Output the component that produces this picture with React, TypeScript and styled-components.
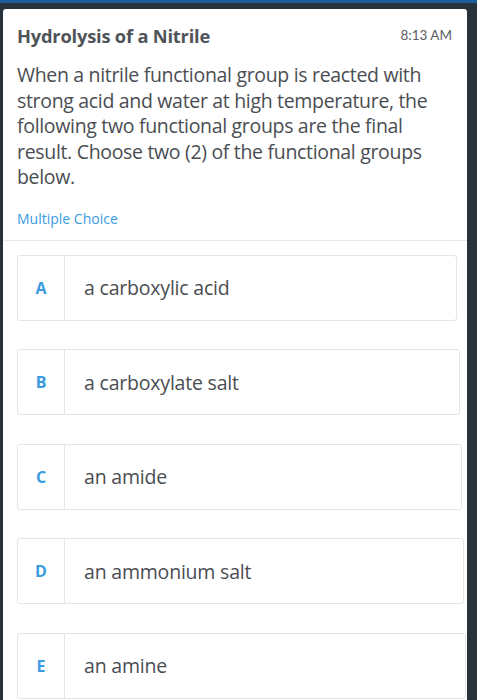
import React, { FC } from 'react';
import styled, { createGlobalStyle } from 'styled-components';

const GlobalStyle = createGlobalStyle`
  html, body {
    margin: 0;
    padding: 0;
    background: #26333d;
  }
  body {
    font-family: "Open Sans", Lato, sans-serif;
  }
`;

const Screen = styled.div`
  width: 477px;
  height: 700px;
  overflow: hidden;
  background: #26333d;
  border-top: 3px solid #1c5b9c;
  box-sizing: border-box;
  padding: 6px 10px 0 3px;
`;

const Card = styled.div`
  background: #ffffff;
  border-radius: 3px 3px 0 0;
  min-height: 720px;
`;

const Header = styled.div`
  display: flex;
  align-items: center;
  justify-content: space-between;
  padding: 14px 15px 0 14px;
  height: 24px;
`;

const Title = styled.div`
  font-size: 18.3px;
  font-weight: 700;
  color: #505459;
  letter-spacing: -0.2px;
`;

const Time = styled.div`
  font-family: Lato, sans-serif;
  font-size: 13.5px;
  color: #5a5e63;
`;

const Question = styled.p`
  margin: 15px 0 0;
  padding: 0 12px 0 14px;
  font-size: 19.5px;
  line-height: 25.5px;
  color: #4a4d52;
  letter-spacing: -0.32px;
`;

const TypeLabel = styled.div`
  padding: 20px 14px 12px;
  font-size: 14px;
  line-height: 18px;
  color: #3a9be0;
  border-bottom: 1px solid #e6e8ea;
`;

const Options = styled.div`
  display: flex;
  flex-direction: column;
  gap: 28.5px;
  padding: 14px 1px 0 14px;
`;

const Option = styled.div<{ $inset: number }>`
  display: flex;
  height: 64px;
  margin-right: ${p => p.$inset}px;
  border: 1px solid #e3e5e7;
  border-radius: 3px;
`;

const Letter = styled.div`
  width: 46px;
  display: flex;
  align-items: center;
  justify-content: center;
  border-right: 1px solid #e3e5e7;
  font-size: 16px;
  font-weight: 700;
  color: #3a9be0;
`;

const OptionText = styled.div`
  display: flex;
  align-items: center;
  padding-left: 19px;
  font-size: 19.5px;
  color: #4a4d52;
  letter-spacing: -0.2px;
`;

const options = [
  { letter: 'A', text: 'a carboxylic acid', inset: 9 },
  { letter: 'B', text: 'a carboxylate salt', inset: 6 },
  { letter: 'C', text: 'an amide', inset: 4 },
  { letter: 'D', text: 'an ammonium salt', inset: 2 },
  { letter: 'E', text: 'an amine', inset: 0 },
];

const App: FC = () => {
  return (
    <Screen>
      <GlobalStyle />
      <Card>
        <Header>
          <Title>Hydrolysis of a Nitrile</Title>
          <Time>8:13 AM</Time>
        </Header>
        <Question>
          When a nitrile functional group is reacted with strong acid and water at high
          temperature, the following two functional groups are the final result. Choose
          two (2) of the functional groups below.
        </Question>
        <TypeLabel>Multiple Choice</TypeLabel>
        <Options>
          {options.map(o => (
            <Option key={o.letter} $inset={o.inset}>
              <Letter>{o.letter}</Letter>
              <OptionText>{o.text}</OptionText>
            </Option>
          ))}
        </Options>
      </Card>
    </Screen>
  );
};

export default App;
